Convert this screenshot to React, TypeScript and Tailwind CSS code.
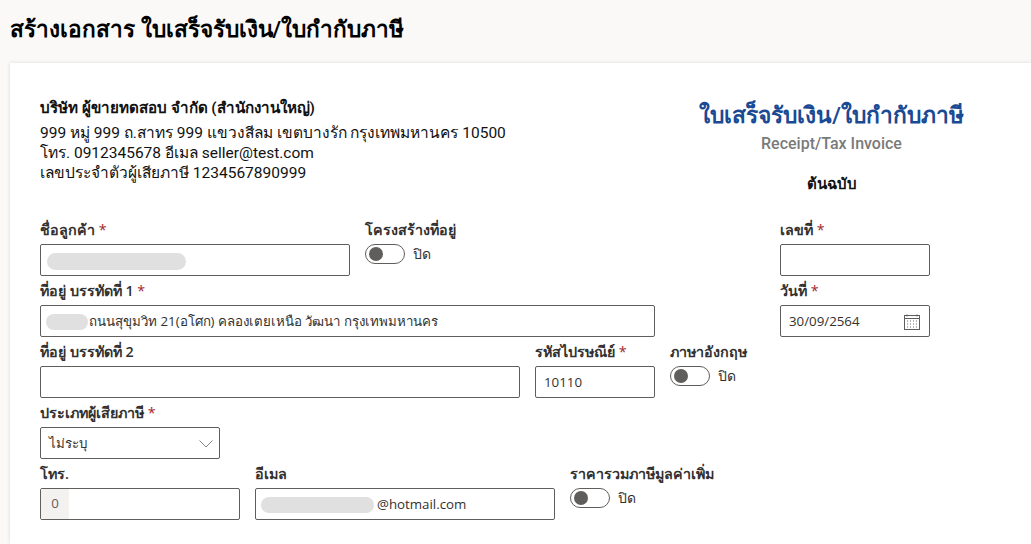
import type { ReactNode } from 'react';

const FORM_FONT = "font-['Open_Sans','Noto_Sans',sans-serif]";

function Label({ text, required }: { text: string; required?: boolean }) {
  return (
    <div className="h-[28px] pt-[3px] text-[14.3px] leading-[22px] font-semibold text-[#323130] whitespace-nowrap">
      {text}
      {required && <span className="font-normal text-[#a4262c]"> *</span>}
    </div>
  );
}

function Box({ children, className = '' }: { children?: ReactNode; className?: string }) {
  return (
    <div className={`relative h-8 flex items-center rounded-[2px] border border-[#605e5c] bg-white text-[13.3px] text-[#323130] ${className}`}>
      {children}
    </div>
  );
}

function Toggle({ text, width }: { text: string; width: string }) {
  return (
    <div className={width}>
      <Label text={text} />
      <div className="flex items-center gap-2 h-5">
        <div className="w-10 h-5 rounded-full border border-[#605e5c] bg-white flex items-center pl-[3px]">
          <div className="w-3.5 h-3.5 rounded-full bg-[#605e5c]" />
        </div>
        <span className="text-sm text-[#323130]">ปิด</span>
      </div>
    </div>
  );
}

function CalendarIcon() {
  return (
    <svg width="16" height="16" viewBox="0 0 16 16" className="text-[#605e5c]" fill="none" stroke="currentColor">
      <rect x="0.5" y="1.5" width="15" height="14" />
      <path d="M0.5 4.5h15" />
      <path d="M3 0.5v2M13 0.5v2" />
      <path d="M3 7h1M6 7h1M9 7h1M12 7h1M3 10h1M6 10h1M9 10h1M12 10h1M3 13h1M6 13h1M9 13h1M12 13h1" strokeWidth="0.9" />
    </svg>
  );
}

function SelectChevron() {
  return (
    <svg width="14" height="8" viewBox="0 0 14 8" fill="none" stroke="#8a8886" strokeWidth="1">
      <path d="M0.5 0.5 7 7 13.5 0.5" />
    </svg>
  );
}

export default function App() {
  return (
    <div className="h-[544px] overflow-hidden bg-[#faf9f8] font-['Roboto','Noto_Sans',sans-serif]">
      <h1 className="h-[63px] pl-2.5 pt-[12px] text-[22.6px] leading-[36px] font-semibold text-black">
        สร้างเอกสาร ใบเสร็จรับเงิน/ใบกำกับภาษี
      </h1>
      <div className="ml-2.5 h-[481px] bg-white shadow-[0_0_4px_rgba(0,0,0,0.12)] pl-[30px] pt-[35px]">
        <div className="flex h-[118px]">
          <div className="w-[620px] text-[#111]">
            <div className="h-[25px] text-[15.2px] leading-5 font-semibold">บริษัท ผู้ขายทดสอบ จำกัด (สำนักงานใหญ่)</div>
            <div className="text-[15.5px] leading-5">999 หมู่ 999 ถ.สาทร 999 แขวงสีลม เขตบางรัก กรุงเทพมหานคร 10500</div>
            <div className="text-[15.5px] leading-5">โทร. 0912345678 อีเมล seller@test.com</div>
            <div className="text-[15.5px] leading-5">เลขประจำตัวผู้เสียภาษี 1234567890999</div>
          </div>
          <div className="ml-[9px] w-[325px] text-center">
            <div className="text-[22.75px] leading-[36px] font-semibold text-[#1a4a94]">ใบเสร็จรับเงิน/ใบกำกับภาษี</div>
            <div className="text-base leading-5 font-medium text-[#7a7a7a]">Receipt/Tax Invoice</div>
            <div className="mt-[18px] text-[15px] leading-6 font-semibold text-[#111]">ต้นฉบับ</div>
          </div>
        </div>

        <div className={`flex flex-col gap-px ${FORM_FONT}`}>
          <div className="flex">
            <div className="w-[310px]">
              <Label text="ชื่อลูกค้า" required />
              <Box>
                <div className="absolute left-[6px] top-[8px] w-[139px] h-[17px] rounded-full bg-[#e0e0e0]" />
              </Box>
            </div>
            <Toggle text="โครงสร้างที่อยู่" width="ml-[15px] w-[415px]" />
            <div className="w-[150px]">
              <Label text="เลขที่" required />
              <Box />
            </div>
          </div>

          <div className="flex">
            <div className="w-[615px]">
              <Label text="ที่อยู่ บรรทัดที่ 1" required />
              <Box className="pl-[48px] pt-[2px]">
                <div className="absolute left-[5px] top-[8px] w-[42px] h-[16px] rounded-full bg-[#e0e0e0]" />
                ถนนสุขุมวิท 21(อโศก) คลองเตยเหนือ วัฒนา กรุงเทพมหานคร
              </Box>
            </div>
            <div className="ml-[125px] w-[150px]">
              <Label text="วันที่" required />
              <Box className="pl-2 pr-[9px] pt-[2px] justify-between">
                30/09/2564
                <CalendarIcon />
              </Box>
            </div>
          </div>

          <div className="flex">
            <div className="w-[480px]">
              <Label text="ที่อยู่ บรรทัดที่ 2" />
              <Box />
            </div>
            <div className="ml-[15px] w-[120px]">
              <Label text="รหัสไปรษณีย์" required />
              <Box className="pl-2 pt-[2px]">10110</Box>
            </div>
            <Toggle text="ภาษาอังกฤษ" width="ml-[15px] w-[150px]" />
          </div>

          <div className="w-[180px]">
            <Label text="ประเภทผู้เสียภาษี" required />
            <Box className="pl-2 pr-[6px] pt-[2px] justify-between">
              ไม่ระบุ
              <SelectChevron />
            </Box>
          </div>

          <div className="flex">
            <div className="w-[200px]">
              <Label text="โทร." />
              <Box>
                <div className="h-full w-7 flex items-center justify-center bg-[#f3f2f1] text-[#605e5c]">0</div>
              </Box>
            </div>
            <div className="ml-[15px] w-[300px]">
              <Label text="อีเมล" />
              <Box className="pl-[121px] pt-[2px]">
                <div className="absolute left-[5px] top-[8px] w-[113px] h-[16px] rounded-full bg-[#e0e0e0]" />
                @hotmail.com
              </Box>
            </div>
            <Toggle text="ราคารวมภาษีมูลค่าเพิ่ม" width="ml-[15px] w-[200px]" />
          </div>
        </div>
      </div>
    </div>
  );
}
